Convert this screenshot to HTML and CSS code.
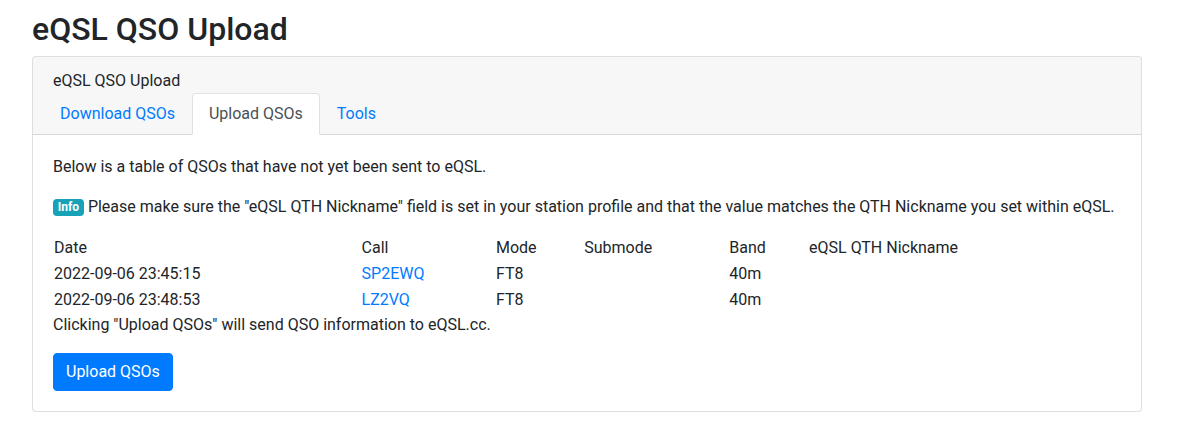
FILE: index.html
```html
<!DOCTYPE html>
<html lang="en">
<head>
  <meta charset="UTF-8">
  <meta name="viewport" content="width=device-width, initial-scale=1.0">
  <title>eQSL QSO Upload</title>
  <link rel="stylesheet" href="styles.css">
</head>
<body>

  <div class="container">
    <h2>eQSL QSO Upload</h2>

    <div class="card">
      <div class="card-header">
        <div class="card-title">eQSL QSO Upload</div>
        <ul class="tabs">
          <li><a class="tab" href="#">Download QSOs</a></li>
          <li><a class="tab active" href="#">Upload QSOs</a></li>
          <li><a class="tab" href="#">Tools</a></li>
        </ul>
      </div>

      <div class="card-body">
        <p>Below is a table of QSOs that have not yet been sent to eQSL.</p>
        <p><span class="badge">Info</span> Please make sure the "eQSL QTH Nickname" field is set in your station profile and that the value matches the QTH Nickname you set within eQSL.</p>

        <table>
          <tr>
            <th>Date</th>
            <th>Call</th>
            <th>Mode</th>
            <th>Submode</th>
            <th>Band</th>
            <th>eQSL QTH Nickname</th>
          </tr>
          <tr>
            <td>2022-09-06 23:45:15</td>
            <td><a href="#">SP2EWQ</a></td>
            <td>FT8</td>
            <td></td>
            <td>40m</td>
            <td></td>
          </tr>
          <tr>
            <td>2022-09-06 23:48:53</td>
            <td><a href="#">LZ2VQ</a></td>
            <td>FT8</td>
            <td></td>
            <td>40m</td>
            <td></td>
          </tr>
        </table>

        <p>Clicking "Upload QSOs" will send QSO information to eQSL.cc.</p>

        <form onsubmit="return false">
          <button type="submit" class="btn">Upload QSOs</button>
        </form>
      </div>
    </div>
  </div>

</body>
</html>
```

FILE: styles.css
```css
body {
  font-family: Roboto, "Liberation Sans", Arial, sans-serif;
  font-size: 16px;
  line-height: 1.5;
  color: #212529;
  margin: 0;
  padding: 0;
  background-color: #fff;
}

.container {
  width: 1110px;
  padding: 10px 0 0 32px;
}

h2 {
  font-size: 32px;
  font-weight: 500;
  line-height: 1.2;
  margin: 0 0 8px 0;
}

a {
  color: #007bff;
  text-decoration: none;
}

p {
  margin: 0 0 16px 0;
}

.card {
  border: 1px solid rgba(0, 0, 0, 0.125);
  border-radius: 4px;
  background-color: #fff;
}

.card-header {
  padding: 12px 20px;
  background-color: rgba(0, 0, 0, 0.03);
  border-bottom: 1px solid rgba(0, 0, 0, 0.125);
  border-radius: 3px 3px 0 0;
}

.tabs {
  display: flex;
  list-style: none;
  padding: 0;
  margin: 0 -10px -12px -10px;
}

.tab {
  display: block;
  padding: 8px 16px;
  border: 1px solid transparent;
  border-radius: 4px 4px 0 0;
  margin-bottom: -1px;
}

.tab.active {
  color: #495057;
  background-color: #fff;
  border-color: #dee2e6 #dee2e6 #fff;
}

.card-body {
  padding: 20px;
}

.badge {
  display: inline-block;
  padding: 2.5px 4.8px;
  font-size: 12px;
  font-weight: 700;
  line-height: 1;
  color: #fff;
  background-color: #17a2b8;
  border-radius: 4px;
  vertical-align: 1px;
}

table {
  width: 100%;
  border-collapse: collapse;
}

th, td {
  padding: 1px;
  text-align: left;
  font-weight: normal;
}

.btn {
  font-family: inherit;
  font-size: 16px;
  line-height: 1.5;
  padding: 6px 12px;
  border: 1px solid #007bff;
  border-radius: 4px;
  background-color: #007bff;
  color: #fff;
  cursor: pointer;
}

.btn:hover {
  background-color: #0069d9;
}
```
